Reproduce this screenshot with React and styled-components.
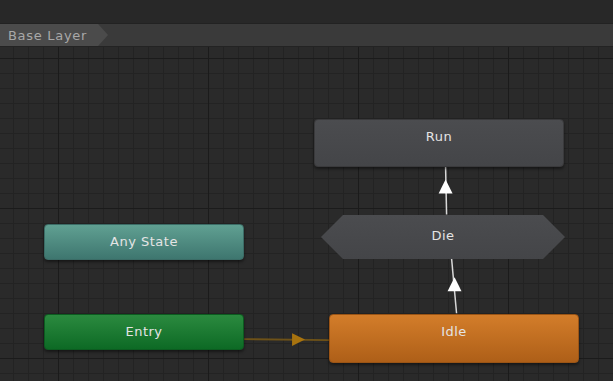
import React from "react";
import styled, { createGlobalStyle, css } from "styled-components";

const Global = createGlobalStyle`
  html, body { margin: 0; padding: 0; background: #282828; }
  body { font-family: "DejaVu Sans", "Liberation Sans", sans-serif; }
`;

const Window = styled.div`
  width: 613px;
  height: 381px;
  display: flex;
  flex-direction: column;
  overflow: hidden;
  background: #282828;
`;

const Toolbar = styled.div`
  height: 23px;
  background: #282828;
  border-bottom: 1px solid #222;
`;

const CrumbBar = styled.div`
  height: 22px;
  display: flex;
  align-items: stretch;
  background: #3a3a3a;
  border-bottom: 1px solid #232323;
`;

const Crumb = styled.div`
  display: flex;
  align-items: center;
  padding: 0 21px 0 8px;
  font-size: 13px;
  letter-spacing: 0.7px;
  color: #a8a8a8;
  background: #4b4b4b;
  clip-path: polygon(0 0, calc(100% - 10px) 0, 100% 50%, calc(100% - 10px) 100%, 0 100%);
`;

const Canvas = styled.div`
  flex: 1;
  position: relative;
  background-color: #2a2a2a;
  background-image:
    linear-gradient(to right, #1b1b1b 1px, transparent 1px),
    linear-gradient(to bottom, #1b1b1b 1px, transparent 1px),
    linear-gradient(to right, #232323 1px, transparent 1px),
    linear-gradient(to bottom, #232323 1px, transparent 1px);
  background-size: 150px 150px, 150px 150px, 15px 15px, 15px 15px;
  background-position: 58px 11px, 58px 11px, 13px 11px, 13px 11px;
`;

const tones = {
  normal: css`
    background: linear-gradient(#4b4c4f, #444548);
    border: 1px solid #3a3a3c;
  `,
  any: css`
    background: linear-gradient(#60a092, #3e766f);
    border: 1px solid #3b6c66;
  `,
  entry: css`
    background: linear-gradient(#2b8a3f, #0d6a25);
    border: 1px solid #0c5c20;
  `,
  default: css`
    background: linear-gradient(#d37d2a, #ae5f18);
    border: 1px solid #9a5415;
  `,
};

const Node = styled.div`
  position: absolute;
  box-sizing: border-box;
  padding-top: 8px;
  text-align: center;
  font-size: 13px;
  line-height: 18px;
  letter-spacing: 0.5px;
  color: #e4e4e4;
  border-radius: 4px;
  box-shadow: 0 2px 3px rgba(0, 0, 0, 0.45);
  ${(p) => tones[p.$tone]}
`;

const HexNode = styled.div`
  position: absolute;
  box-sizing: border-box;
  display: flex;
  align-items: center;
  justify-content: center;
  padding-bottom: 4px;
  font-size: 13px;
  letter-spacing: 0.5px;
  color: #e4e4e4;
  background: linear-gradient(#4b4c4f, #444548);
  clip-path: polygon(22px 0, calc(100% - 22px) 0, 100% 50%, calc(100% - 22px) 100%, 22px 100%, 0 50%);
`;

const Edges = styled.svg`
  position: absolute;
  inset: 0;
  width: 100%;
  height: 100%;
  pointer-events: none;
`;

const nodes = [
  { label: "Run", tone: "normal", x: 314, y: 72, w: 250, h: 48 },
  { label: "Any State", tone: "any", x: 44, y: 177, w: 200, h: 36 },
  { label: "Entry", tone: "entry", x: 44, y: 267, w: 200, h: 36 },
  { label: "Idle", tone: "default", x: 329, y: 267, w: 250, h: 49 },
];

export default function App() {
  return (
    <Window>
      <Global />
      <Toolbar />
      <CrumbBar>
        <Crumb>Base Layer</Crumb>
      </CrumbBar>
      <Canvas>
        <Edges viewBox="0 0 613 335">
          <line x1="244" y1="293" x2="329" y2="294" stroke="#6e5218" strokeWidth="2" />
          <polygon points="292,287 292,300 305,293.5" fill="#a8730f" />
          <line x1="457" y1="267" x2="452" y2="212" stroke="#d8d8d8" strokeWidth="1.5" />
          <polygon points="455,231 448,245 462,245" fill="#ffffff" />
          <line x1="447" y1="168" x2="446" y2="120" stroke="#d8d8d8" strokeWidth="1.5" />
          <polygon points="446,133 439,147 453,147" fill="#ffffff" />
        </Edges>
        {nodes.map((n) => (
          <Node key={n.label} $tone={n.tone} style={{ left: n.x, top: n.y, width: n.w, height: n.h }}>
            {n.label}
          </Node>
        ))}
        <HexNode style={{ left: 321, top: 168, width: 244, height: 44 }}>Die</HexNode>
      </Canvas>
    </Window>
  );
}
